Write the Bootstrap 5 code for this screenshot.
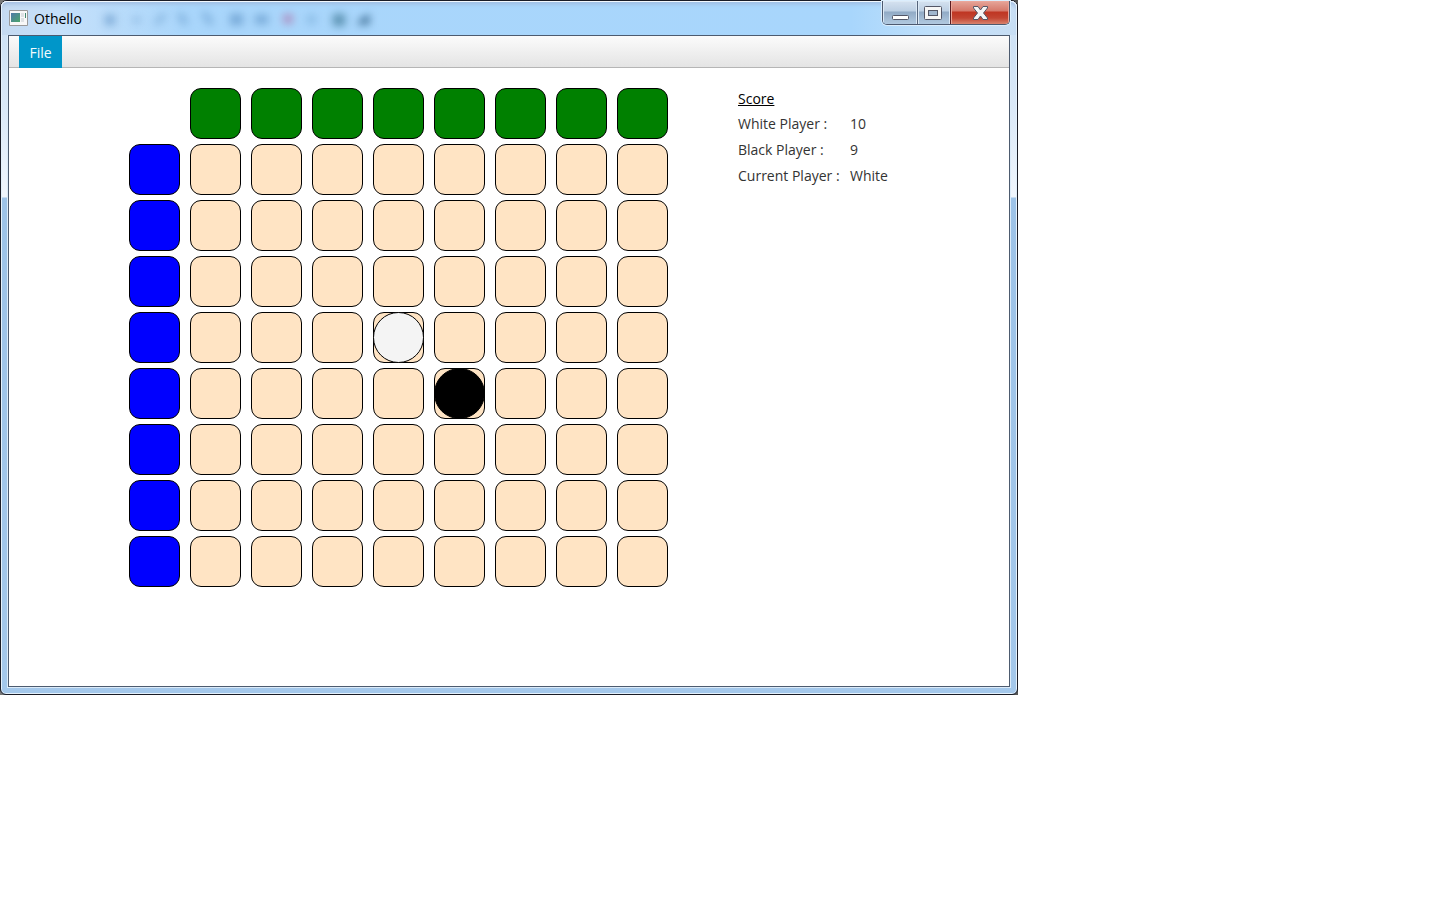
<!DOCTYPE html>
<html lang="en">
<head>
<meta charset="utf-8">
<meta name="viewport" content="width=device-width, initial-scale=1">
<title>Othello</title>
<link href="https://cdn.jsdelivr.net/npm/bootstrap@5.3.0/dist/css/bootstrap.min.css" rel="stylesheet">
<style>
  body { font-family: "Open Sans", "Noto Sans", sans-serif; font-size: 14px; line-height: 26px; color: #333; background: #fff; }
  .app-frame {
    max-width: 1018px; padding: 0 7px 7px; border: 1px solid #1a1c26; border-radius: 7px 7px 6px 6px;
    background: linear-gradient(#c9dff5 0, #dbe9f8 110px, #f0f6fd 196px, #9dc3e8 197px, #a4c8eb 100%);
    box-shadow: inset 0 0 0 1px #e4f1fc;
  }
  .corners { max-width: 1018px; background: linear-gradient(90deg, #777 0 10px, #fff 10px 1008px, #555 1008px); }
  .title-bar {
    height: 34px; margin: 0 -7px; padding: 0 7px 0 6px; position: relative; border-radius: 6px 6px 0 0;
    background: linear-gradient(90deg, #c5daf1 0, #c5e0fa 60px, #a9d6fb 190px, #a8d6fc 850px, #bfe0fb 930px, #c8def4 100%);
    box-shadow: inset 0 1px #f2f8fe, inset 1px 0 #e4f1fc, inset -1px 0 #e4f1fc, inset 0 5px 4px -2px #a1bce0;
  }
  .reflection { position: absolute; left: 90px; top: 2px; filter: blur(4px); }
  .app-name { font-size: 14px; line-height: 36px; color: #000; }
  .caption-set { height: 24px; border: 1px solid #4d5a70; border-top: 0; border-radius: 0 0 5px 5px; overflow: hidden; box-shadow: 0 0 0 1px #dceefd; }
  .caption-key { border: 0; padding: 0; height: 24px; background: linear-gradient(#d5e2f0 0, #bccfe3 10px, #91aac5 11px, #b4cce2 100%); box-shadow: inset 0 0 0 1px #dce9f5; }
  .caption-key + .caption-key { border-left: 1px solid #55647b; }
  .caption-key.shut { background: linear-gradient(#e6a69a 0, #d5786a 10px, #bf3522 11px, #c34532 17px, #dc8d78 100%); box-shadow: inset 0 0 0 1px #eaa69a; border-color: #5b1c20; }
  .key-min { width: 34px; }
  .key-max { width: 33px; }
  .shut { width: 59px; }
  .client { border: 1px solid #4d5b6f; background: #fff; box-shadow: 0 0 0 1px #dcebf9; }
  .menu-strip { height: 32px; padding-left: 10px; border-bottom: 1px solid #b5b5b5; background: linear-gradient(#fbfbfb, #e4e4e4); }
  .menu-item { height: 32px; width: 43px; border: 0; padding: 2px 0 0; background: #0096c9; color: #f5fbfd; line-height: 30px; }
  .play-area { padding: 20px 20px 99px 120px; gap: 20px 70px; }
  .board { display: grid; grid-template-columns: repeat(9, 51px); grid-auto-rows: 51px; gap: 5px 10px; }
  .square { padding: 0; border: 1px solid #000; border-radius: 11px; background: #ffe4c4; }
  .square.top { background: #008000; }
  .square.side { background: #00f; }
  .disc { display: block; width: 51px; height: 51px; margin: -1px; border: 1px solid #000; border-radius: 50%; background: #f4f4f4; }
  .disc.dark { background: #000; }
  .score caption { caption-side: top; padding: 0 0 1px; color: #000; line-height: 22px; text-decoration: underline; }
  .score th { font-weight: 400; width: 112px; padding: 0; }
  .score td { padding: 0; }
</style>
</head>
<body>
<div class="corners">
<div class="app-frame">
  <header class="title-bar d-flex align-items-start">
    <svg class="reflection" width="300" height="32" aria-hidden="true">
      <g fill="#5b8fc4" opacity=".65">
        <rect x="14" y="12" width="10" height="10"/><rect x="42" y="15" width="7" height="4"/><path d="M63 20l9-10 3 3-9 9z"/><path d="M86 11l5-1 6 10-5 2z"/><path d="M110 10l5-1 8 11-5 2z"/>
        <rect x="139" y="11" width="13" height="11"/><rect x="164" y="12" width="13" height="9"/><rect x="216" y="12" width="9" height="9" opacity=".6"/>
      </g>
      <circle cx="197" cy="16" r="5" fill="#af6ca5" opacity=".75"/><rect x="242" y="11" width="12" height="12" fill="#3e7897" opacity=".75"/><path d="M265 21l13-10v10z" fill="#28587f"/>
    </svg>
    <svg class="mt-2 mx-1 ms-0 flex-shrink-0 position-relative" width="23" height="18" viewBox="-2 0 23 18" aria-hidden="true">
      <defs><linearGradient id="pic" x2="1" y2="1"><stop stop-color="#4f79a8"/><stop offset="1" stop-color="#4aa56b"/></linearGradient></defs>
      <path d="M.5 1.500h18v15h-18z" fill="#f8f8f8" stroke="#999"/>
      <path d="M2 4h9v9H2z" fill="url(#pic)"/><path d="M12 5h3M12 7h3M12 10h3M12 12h3" stroke="#c5cbd0"/><path d="M16 4h1v5h-1z" fill="#438970"/>
    </svg>
    <span class="app-name position-relative">Othello</span>
    <div class="caption-set d-flex ms-auto flex-shrink-0">
      <button class="caption-key key-min" aria-label="Minimize"><svg class="d-block" width="34" height="24"><rect x="9.500" y="14.500" width="16" height="4" rx="1" fill="#fff" stroke="#535666"/></svg></button>
      <button class="caption-key key-max" aria-label="Maximize"><svg class="d-block" width="32" height="24"><rect x="6.500" y="5.500" width="17" height="13" rx="1" fill="#f6f6f6" stroke="#535666"/><rect x="10.500" y="9.500" width="9" height="5" fill="#a0b6ce" stroke="#535666"/></svg></button>
      <button class="caption-key shut" aria-label="Close"><svg class="d-block" width="58" height="24"><path d="M22.500 5.500h4.500l2.500 3.500 2.500-3.500h4.500v1.500l-4 5 4 5v1.500h-4.500l-2.500-3.500-2.500 3.500h-4.500v-1.500l4-5-4-5z" fill="#f5f5f5" stroke="#535666"/></svg></button>
    </div>
  </header>
  <main class="client">
    <nav class="menu-strip"><button class="menu-item">File</button></nav>
    <div class="play-area d-flex flex-wrap align-items-start">
      <div class="board" id="board"></div>
      <table class="score">
        <caption>Score</caption>
        <tbody>
          <tr><th scope="row">White Player :</th><td>10</td></tr>
          <tr><th scope="row">Black Player :</th><td>9</td></tr>
          <tr><th scope="row">Current Player :</th><td>White</td></tr>
        </tbody>
      </table>
    </div>
  </main>
</div>
</div>
<script src="https://cdn.jsdelivr.net/npm/bootstrap@5.3.0/dist/js/bootstrap.bundle.min.js"></script>
<script>
  const board = document.getElementById('board');
  const discs = { '4,4': 'disc', '5,5': 'disc dark' };
  for (let r = 0; r < 9; r++) for (let c = 0; c < 9; c++) {
    if (!r && !c) { board.append(document.createElement('span')); continue; }
    const b = document.createElement('button');
    b.className = 'square' + (!r ? ' top' : !c ? ' side' : '');
    b.setAttribute('aria-label', !r ? `Column ${c}` : !c ? `Row ${r}` : `Row ${r}, column ${c}`);
    const d = discs[`${r},${c}`];
    if (d) { const s = document.createElement('span'); s.className = d; b.append(s); }
    board.append(b);
  }
</script>
</body>
</html>
